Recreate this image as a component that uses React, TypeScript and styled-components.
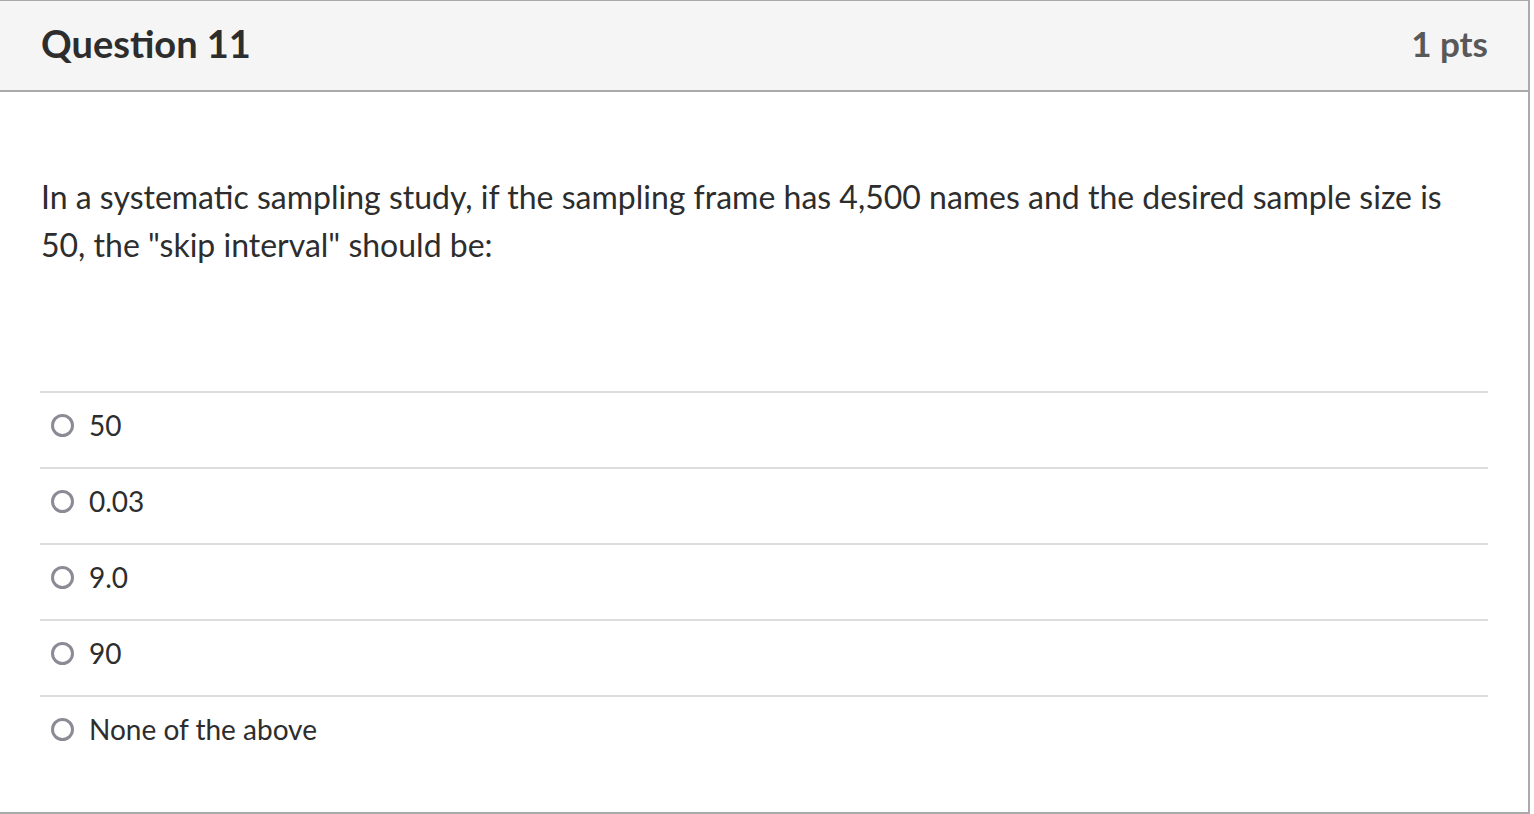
import React from "react";
import styled, { createGlobalStyle } from "styled-components";

const GlobalStyle = createGlobalStyle`
  html, body {
    margin: 0;
    padding: 0;
    background: #ffffff;
  }
  body {
    font-family: Lato, "Open Sans", "Liberation Sans", sans-serif;
    color: #2d2d2d;
  }
`;

const answers = ["50", "0.03", "9.0", "90", "None of the above"];

const App = () => {
  return (
    <>
      <GlobalStyle />
      <Card>
        <Header>
          <Title>Question 11</Title>
          <Points>1 pts</Points>
        </Header>
        <Body>
          <QuestionText>
            In a systematic sampling study, if the sampling frame has 4,500 names and the desired sample size is
            50, the "skip interval" should be:
          </QuestionText>
          <AnswerList>
            {answers.map((a) => (
              <AnswerRow key={a}>
                <Radio />
                <AnswerLabel>{a}</AnswerLabel>
              </AnswerRow>
            ))}
          </AnswerList>
        </Body>
      </Card>
    </>
  );
};

const Card = styled.div`
  width: 1528px;
  height: 811px;
  border-top: 1px solid #aaaaaa;
  border-right: 2px solid #aaaaaa;
  border-bottom: 2px solid #aaaaaa;
  display: flex;
  flex-direction: column;
`;

const Header = styled.div`
  box-sizing: border-box;
  height: 91px;
  background: #f5f5f5;
  border-bottom: 2px solid #aaaaaa;
  padding: 0 40px 5px 41px;
  display: flex;
  align-items: center;
  justify-content: space-between;
`;

const Title = styled.h2`
  margin: 0;
  font-size: 38px;
  font-weight: 700;
  color: #2d2d2d;
`;

const Points = styled.div`
  font-size: 35px;
  font-weight: 700;
  color: #595959;
`;

const Body = styled.div`
  padding: 0 40px 0 41px;
  flex: 1;
`;

const QuestionText = styled.p`
  margin: 81px 0 0;
  height: 218px;
  max-width: 1420px;
  font-size: 32px;
  line-height: 48px;
  color: #2d2d2d;
`;

const AnswerList = styled.div`
  display: flex;
  flex-direction: column;
  margin-left: -1px;
`;

const AnswerRow = styled.label`
  height: 74px;
  border-top: 2px solid #dddddd;
  display: flex;
  align-items: center;
  gap: 14px;
  padding-left: 11px;
  & > * {
    margin-bottom: 10px;
  }
`;

const Radio = styled.span`
  width: 17px;
  height: 17px;
  border: 3.5px solid #8b8b96;
  border-radius: 50%;
  flex-shrink: 0;
  margin-right: 1px;
`;

const AnswerLabel = styled.span`
  font-size: 28px;
  color: #2d2d2d;
`;

export default App;
